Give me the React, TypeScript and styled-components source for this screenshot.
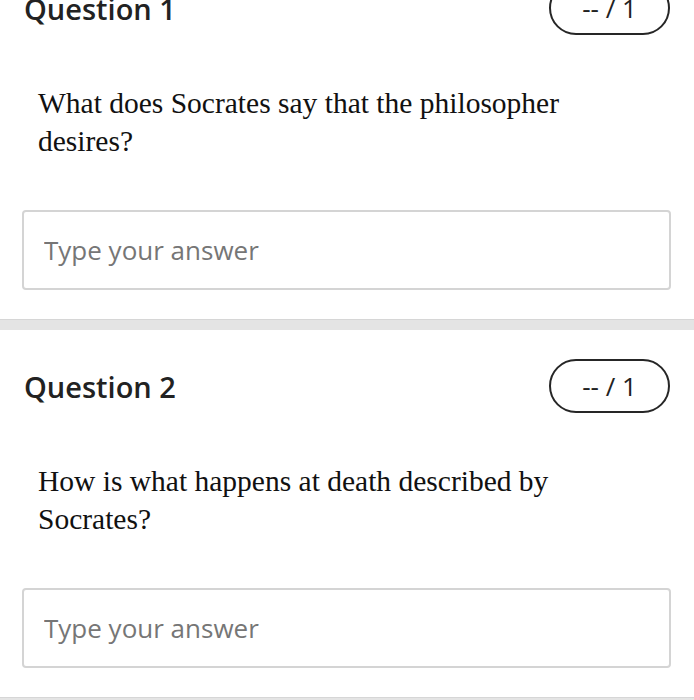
import React from 'react'
import styled, { createGlobalStyle } from 'styled-components'

const GlobalStyle = createGlobalStyle`
  html, body {
    margin: 0;
    padding: 0;
    background: #fff;
  }
  body {
    font-family: "Open Sans", "Liberation Sans", sans-serif;
    overflow: hidden;
  }
`

const questions = [
  { id: 1, text: 'What does Socrates say that the philosopher desires?' },
  { id: 2, text: 'How is what happens at death described by Socrates?' },
]

export default function App() {
  return (
    <>
      <GlobalStyle />
      <Page>
        {questions.map(q => (
          <QuestionCard key={q.id}>
            <Header>
              <Title>Question {q.id}</Title>
              <Points>-- / 1</Points>
            </Header>
            <Prompt>{q.text}</Prompt>
            <AnswerBox placeholder="Type your answer" />
          </QuestionCard>
        ))}
      </Page>
    </>
  )
}

const Page = styled.main`
  display: flex;
  flex-direction: column;
  margin-top: -48px;
`

const QuestionCard = styled.section`
  display: flex;
  flex-direction: column;
  padding: 29px 23px 30px 22px;
  border-bottom: 10px solid #e4e4e4;
  box-shadow: inset 0 -1px 0 #d6d6d6;
`

const Header = styled.div`
  display: flex;
  align-items: center;
  justify-content: space-between;
  height: 54px;
`

const Title = styled.h2`
  margin: 0 0 0 2px;
  font-family: "Open Sans", sans-serif;
  font-size: 29px;
  font-weight: 600;
  color: #222;
`

const Points = styled.div`
  box-sizing: border-box;
  width: 121px;
  height: 54px;
  border: 2px solid #262626;
  border-radius: 27px;
  display: flex;
  align-items: center;
  justify-content: center;
  font-family: "Open Sans", sans-serif;
  font-size: 26px;
  color: #222;
  margin-right: 1px;
`

const Prompt = styled.p`
  margin: 49px 0 50px 16px;
  font-family: "Liberation Serif", "Times New Roman", serif;
  font-size: 29.5px;
  line-height: 38px;
  color: #111;
  max-width: 560px;
`

const AnswerBox = styled.input`
  box-sizing: border-box;
  height: 80px;
  width: 100%;
  border: 2px solid #d4d4d4;
  border-radius: 4px;
  padding: 0 20px;
  font-family: "Open Sans", sans-serif;
  font-size: 26px;
  color: #222;
  outline: none;

  &::placeholder {
    color: #767676;
  }
`
